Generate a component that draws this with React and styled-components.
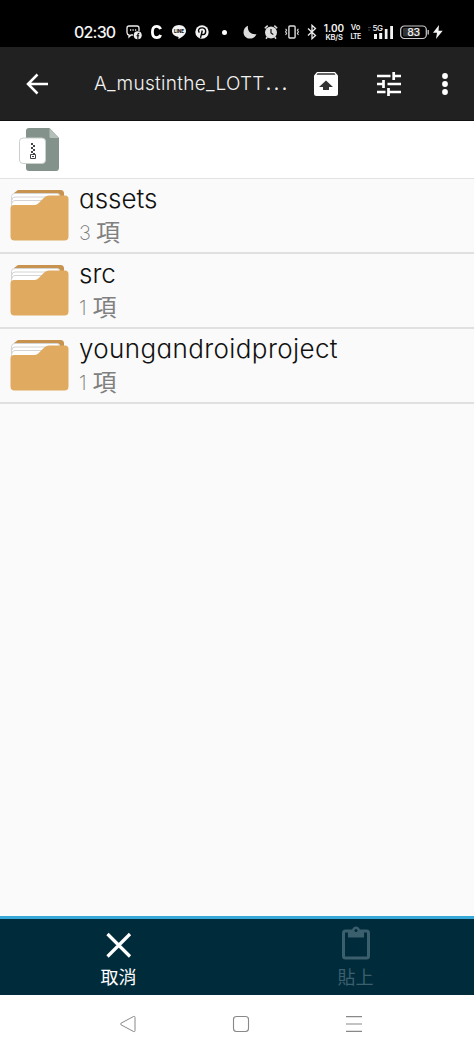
import React from "react";
import styled, { createGlobalStyle } from "styled-components";

const GlobalStyle = createGlobalStyle`
  * { box-sizing: border-box; }
  body { margin: 0; background: #fafafa; font-family: Inter, "Noto Sans CJK TC", sans-serif; }
  svg { display: block; flex: none; }
`;

const Screen = styled.div`
  width: 474px;
  height: 1053px;
  display: flex;
  flex-direction: column;
  overflow: hidden;
  background: #fafafa;
`;

const StatusBar = styled.header`
  height: 47px;
  flex: none;
  display: flex;
  align-items: center;
  padding: 17px 0 0 74px;
  background: #000;
  color: #f4f4f4;
`;

const Slot = styled.div`
  flex: none;
  width: ${(p) => p.$w}px;
  margin-left: ${(p) => p.$gap || 0}px;
  white-space: nowrap;
`;

const Clock = styled(Slot)`
  font: 500 16px/20px Inter, sans-serif;
  letter-spacing: -0.8px;
`;

const Stack = styled(Slot)`
  display: flex;
  flex-direction: column;
  align-items: center;
  font-family: Inter, sans-serif;
  font-weight: 600;
`;

const StackLine = styled.span`
  font-size: ${(p) => p.$size}px;
  line-height: ${(p) => p.$line || 10}px;
  letter-spacing: ${(p) => p.$track || 0}px;
`;

const Toolbar = styled.nav`
  height: 74px;
  flex: none;
  display: flex;
  align-items: center;
  padding: 1px 0 0 24px;
  background: #212121;
  border-bottom: 1px solid #111;
  color: #fff;
`;

const Title = styled.h1`
  width: 206px;
  margin: 0 0 0 44px;
  font: 300 19px/26px Inter, sans-serif;
  font-feature-settings: "cv11";
  letter-spacing: 0.3px;
  white-space: nowrap;
  color: #f2f2f2;
`;

const Dots = styled.span`
  margin-left: 1px;
  font-weight: 400;
  letter-spacing: 2.6px;
`;

const ToolButton = styled.button`
  display: flex;
  flex: none;
  padding: 0;
  margin-left: ${(p) => p.$gap || 0}px;
  border: 0;
  background: none;
  color: inherit;
`;

const Breadcrumb = styled.div`
  height: 58px;
  flex: none;
  padding: 6px 0 0 18px;
  background: #fff;
  border-bottom: 1px solid #e2e2e2;
`;

const FileList = styled.main`
  flex: 1;
`;

const Row = styled.article`
  height: 75px;
  display: flex;
  padding: 10px 0 0 10px;
  border-bottom: 2px solid #e0e0e0;
`;

const RowText = styled.div`
  margin: -6px 0 0 10px;
`;

const Name = styled.div`
  font: 300 26px/32px Inter, sans-serif;
  font-feature-settings: "cv11";
  letter-spacing: ${(p) => p.$track}px;
  color: #111;
`;

const Count = styled.div`
  display: flex;
  height: 34px;
  gap: ${(p) => p.$gap}px;
  color: #777;
`;

const Digit = styled.span`
  font: 200 20px/34px Inter, sans-serif;
  padding-top: 1px;
`;

const Unit = styled.span`
  margin-top: -1px;
  font: 400 24px/34px "Noto Sans CJK TC", sans-serif;
  color: #808080;
`;

const ActionBar = styled.footer`
  height: 79px;
  flex: none;
  display: grid;
  grid-template-columns: 1fr 1fr;
  background: #002b3b;
  border-top: 3px solid #35a8d8;
`;

const Action = styled.button`
  display: flex;
  flex-direction: column;
  align-items: center;
  padding: 5px 0 0;
  border: 0;
  background: none;
  color: ${(p) => (p.$dim ? "#3c5f6d" : "#fff")};
  font: 400 18px/24px "Noto Sans CJK TC", sans-serif;
`;

const SystemNav = styled.nav`
  height: 58px;
  flex: none;
  display: flex;
  justify-content: center;
  align-items: center;
  gap: 95px;
  padding-left: 7px;
  background: #fff;
`;

const ChatIcon = () => (
  <svg width="16" height="16" viewBox="0 0 16 16" fill="none" stroke="#eee" strokeWidth="1.3">
    <path d="M7 11H5l-2 2v-2Q1 10.5 1 8.5V4q0-2 2-2h8q2 0 2 2v3" />
    <path d="M4 6h1.2M6.5 6h1.2M9 6h1.2" strokeWidth="1.5" />
    <circle cx="11.7" cy="11.3" r="4" fill="#eee" stroke="none" />
    <path d="M13.4 9.2h-.5q-1 0-1 1v5M10.5 11.7h2.7" stroke="#000" strokeWidth="1.1" />
  </svg>
);

const LetterIcon = () => (
  <svg width="12" height="16" viewBox="0 0 12 16" fill="none" stroke="#fff" strokeWidth="2.8">
    <path d="M10.500 5.200Q9.800 2.400 6.500 2.400 2.400 2.400 2.400 8t4.100 5.600q3.300 0 4-2.800" />
  </svg>
);

const LineIcon = () => (
  <svg width="16" height="16" viewBox="0 0 16 16">
    <path fill="#f4f4f4" d="M8 1C3.8 1 1 3.8 1 7c0 3 2.500 5.300 6 5.800.7.1.6.7.4 2.200 2.600-1.200 7.600-4.100 7.600-8C15 3.800 12.200 1 8 1Z" />
    <text x="8" y="8.600" textAnchor="middle" fontFamily="Inter, sans-serif" fontWeight="800" fontSize="4.600" fill="#111">LINE</text>
  </svg>
);

const PinIcon = () => (
  <svg width="14" height="16" viewBox="0 0 14 16" fill="none">
    <circle cx="7" cy="8" r="6.700" fill="#f4f4f4" />
    <path d="M4.300 8.700C2.200 5.500 4.500 3.900 7.200 3.900c5 0 4 6.700.9 6.700q-1 0-1.500-.8M7.300 6.500 5.500 13.800" stroke="#000" strokeWidth="1.400" />
  </svg>
);

const MoonIcon = () => (
  <svg width="14" height="16" viewBox="0 0 14 16">
    <path fill="#ddd" d="M5 1.700C4 7 7.800 11 13.500 10.200 12.200 13.200 9.800 14.600 7 14.600 3.300 14.600.5 11.900.5 8.200.5 5.300 2.200 2.700 5 1.700Z" />
  </svg>
);

const AlarmIcon = () => (
  <svg width="14" height="16" viewBox="0 0 14 16" fill="none">
    <circle cx="7" cy="8.500" r="6" fill="#ddd" />
    <path d="M.8 4.200 3.700 1.600M13.200 4.200l-2.900-2.600M3.300 13 2 14.700M10.700 13l1.300 1.700" stroke="#ddd" strokeWidth="1.500" />
    <path d="M7 5v4l2.300 1.500" stroke="#111" strokeWidth="1.200" />
  </svg>
);

const VibrateIcon = () => (
  <svg width="14" height="16" viewBox="0 0 14 16" fill="none" stroke="#ddd" strokeWidth="1.400">
    <rect x="3.900" y="2" width="6.200" height="12" rx="1" />
    <path d="m.6 4.800 1 1.500-1 1.500 1 1.500-1 1.700M13.400 4.800l-1 1.500 1 1.500-1 1.500 1 1.700" strokeWidth="1.100" />
  </svg>
);

const BluetoothIcon = () => (
  <svg width="10" height="16" viewBox="0 0 10 16" fill="none" stroke="#eee" strokeWidth="1.300">
    <path d="m1 4.500 7.500 7L5 14.700V1.300l3.500 3.200-7.500 7" />
  </svg>
);

const SignalIcon = () => (
  <svg width="26" height="18" viewBox="0 0 26 18" fill="#f4f4f4">
    <path d="M0 4h3v1H0zM0 6.500h2v1H0z" fill="#444" />
    <text x="4.500" y="8" fontFamily="Inter, sans-serif" fontWeight="500" fontSize="8" letterSpacing="-.4">5G</text>
    <path d="M6 11h3v5H6zM11.200 10h3v6h-3zM16.800 6h2.700v10h-2.700zM22.200 3H25v13h-2.800z" />
  </svg>
);

const BatteryIcon = () => (
  <svg width="29" height="16" viewBox="0 0 29 16" fill="none" stroke="#ccc">
    <rect x=".7" y="2" width="25.600" height="12.500" rx="3.600" strokeWidth="1.200" />
    <rect x="3" y="4" width="17" height="8.500" rx="1" fill="#333" stroke="none" />
    <path d="M28.200 6v4.500" strokeWidth="1.300" />
    <text x="13.500" y="12" textAnchor="middle" fontFamily="Inter, sans-serif" fontWeight="500" fontSize="10.500" letterSpacing="-.4" fill="#eee" stroke="none">83</text>
  </svg>
);

const BoltIcon = () => (
  <svg width="10" height="16" viewBox="0 0 10 16">
    <path fill="#f4f4f4" d="M6 1 0 8.800h4L3 15l6.700-8.300H5.500Z" />
  </svg>
);

const BackIcon = () => (
  <svg width="26" height="26" viewBox="0 0 26 26" fill="none" stroke="#fff" strokeWidth="2.500">
    <path d="M24 13H4.500M13.500 3.500 4 13l9.500 9.500" />
  </svg>
);

const ExtractIcon = () => (
  <svg width="26" height="26" viewBox="0 0 26 26">
    <path fill="#fff" d="M4 1h18l3 3.500V22.500q0 2.500-2.500 2.500h-19Q1 25 1 22.500v-18Z" />
    <path fill="#333" d="M4.500 2.300h17l1 1.500h-19ZM13 9.500l7 6.500h-4v3h-6v-3H6Z" />
  </svg>
);

const TuneIcon = () => (
  <svg width="26" height="26" viewBox="0 0 26 26" fill="none" stroke="#fff" strokeWidth="2.700">
    <path d="M1 5h13.500M17.700 5H25M17.700 1v8M1 13h7M11.500 13H25M7.500 9v8M1 21h8.500M12.500 21H25M12.500 17v8" />
  </svg>
);

const MoreIcon = () => (
  <svg width="8" height="26" viewBox="0 0 8 26" fill="#fff">
    <circle cx="4" cy="5" r="2.900" />
    <circle cx="4" cy="13" r="2.900" />
    <circle cx="4" cy="21" r="2.900" />
  </svg>
);

const ArchiveIcon = () => (
  <svg width="42" height="46" viewBox="0 0 42 46">
    <path fill="#84928c" d="M11 1h20.500L41 11v29.500Q41 44 38 44H11q-3 0-3-3V4q0-3 3-3Z" />
    <path fill="#b4bfba" d="M31.500 1 41 11h-8q-1.500 0-1.500-1.500Z" />
    <rect x="1.500" y="11" width="26" height="25.500" rx="3.500" fill="#fff" stroke="#c9d0cd" />
    <path d="M13 16h2v2h-2zM15 18h2v2h-2zM13 20h2v2h-2zM15 22h2v2h-2zM13 24h2v2h-2zM15 26h2v1.500h-2z" fill="#444" />
    <path d="M12.500 27.500h5v4h-5zM14 29.500h2" fill="none" stroke="#444" />
  </svg>
);

const FolderIcon = () => (
  <svg width="59" height="54" viewBox="0 0 59 54">
    <path fill="#c8924f" d="M8 1h42.500q3.500 0 3.500 3.500V20H4V4Z" />
    <path fill="#fff" stroke="#d4d4d4" d="M5 4.500h42q3 0 3 3v12H1.500V7.500Q1.500 4.500 5 4.500Z" />
    <path fill="none" stroke="#d4d4d4" d="M2 11q0-3 3-3h31M2 14.500q0-3 3-3h27" />
    <path fill="#e0ab61" d="M4 16h20.500q2.500 0 4-1.700l6-6Q36.500 6.500 39 6.500h16q3.500 0 3.500 3.500v37.500q0 4-4 4h-50q-4 0-4-4V19.500Q.5 16 4 16Z" />
  </svg>
);

const CloseIcon = () => (
  <svg width="30" height="40" viewBox="0 0 30 40" fill="none" stroke="#fff" strokeWidth="3.200">
    <path d="m3.500 10 22.500 22.500M26 10 3.500 32.500" />
  </svg>
);

const ClipboardIcon = () => (
  <svg width="30" height="40" viewBox="0 0 30 40" fill="none" stroke="currentColor">
    <rect x="2.500" y="7" width="25" height="27" rx="2" strokeWidth="3" />
    <path fill="currentColor" stroke="none" d="M7 6h4q1-3.500 4-3.500t4 3.500h4v7.500H7Z" />
    <circle cx="15" cy="6.500" r="1.500" fill="#002b3b" stroke="none" />
  </svg>
);

const NavBackIcon = () => (
  <svg width="18" height="18" viewBox="0 0 18 18" fill="none" stroke="#888">
    <path d="M2 8.200 14.500 1.500q1.500-.7 1.500 1v13q0 1.700-1.500 1L2 9.800q-1-.8 0-1.600Z" />
  </svg>
);

const NavHomeIcon = () => (
  <svg width="18" height="18" viewBox="0 0 18 18" fill="none" stroke="#888" strokeWidth="1.100">
    <rect x="1.500" y="1.500" width="15" height="15" rx="3" />
  </svg>
);

const NavMenuIcon = () => (
  <svg width="18" height="18" viewBox="0 0 18 18" fill="none" stroke="#888" strokeWidth="1.200">
    <path d="M1 1.600h16M1 9h16M1 16.400h16" />
  </svg>
);

const folders = [
  { name: "assets", count: 3, gap: 5, track: 0 },
  { name: "src", count: 1, gap: 6, track: 0 },
  { name: "youngandroidproject", count: 1, gap: 6, track: 0.38 },
];

export default function App() {
  return (
    <Screen>
      <GlobalStyle />
      <StatusBar>
        <Clock $w={42}>02:30</Clock>
        <Slot $w={16} $gap={10}><ChatIcon /></Slot>
        <Slot $w={12} $gap={8}><LetterIcon /></Slot>
        <Slot $w={16} $gap={9}><LineIcon /></Slot>
        <Slot $w={14} $gap={8}><PinIcon /></Slot>
        <Slot $w={5} $gap={13}>
          <svg width="5" height="5"><circle cx="2.500" cy="2.500" r="2.500" fill="#fff" /></svg>
        </Slot>
        <Slot $w={14} $gap={16}><MoonIcon /></Slot>
        <Slot $w={14} $gap={7}><AlarmIcon /></Slot>
        <Slot $w={14} $gap={7}><VibrateIcon /></Slot>
        <Slot $w={10} $gap={8}><BluetoothIcon /></Slot>
        <Stack $w={22} $gap={6}>
          <StackLine $size={10}>1.00</StackLine>
          <StackLine $size={7.5} $track={-0.2} $line={9}>KB/S</StackLine>
        </Stack>
        <Stack $w={11} $gap={5}>
          <StackLine $size={7.5}>Vo</StackLine>
          <StackLine $size={7} $track={-0.8} $line={8}>LTE</StackLine>
        </Stack>
        <Slot $w={26} $gap={7}><SignalIcon /></Slot>
        <Slot $w={29} $gap={6}><BatteryIcon /></Slot>
        <Slot $w={10} $gap={4}><BoltIcon /></Slot>
      </StatusBar>
      <Toolbar>
        <ToolButton><BackIcon /></ToolButton>
        <Title>A_mustinthe_LOTT<Dots>...</Dots></Title>
        <ToolButton $gap={13}><ExtractIcon /></ToolButton>
        <ToolButton $gap={37}><TuneIcon /></ToolButton>
        <ToolButton $gap={39}><MoreIcon /></ToolButton>
      </Toolbar>
      <Breadcrumb><ArchiveIcon /></Breadcrumb>
      <FileList>
        {folders.map((f) => (
          <Row key={f.name}>
            <FolderIcon />
            <RowText>
              <Name $track={f.track}>{f.name}</Name>
              <Count $gap={f.gap}>
                <Digit>{f.count}</Digit>
                <Unit>項</Unit>
              </Count>
            </RowText>
          </Row>
        ))}
      </FileList>
      <ActionBar>
        <Action><CloseIcon />取消</Action>
        <Action $dim><ClipboardIcon />貼上</Action>
      </ActionBar>
      <SystemNav>
        <NavBackIcon />
        <NavHomeIcon />
        <NavMenuIcon />
      </SystemNav>
    </Screen>
  );
}
